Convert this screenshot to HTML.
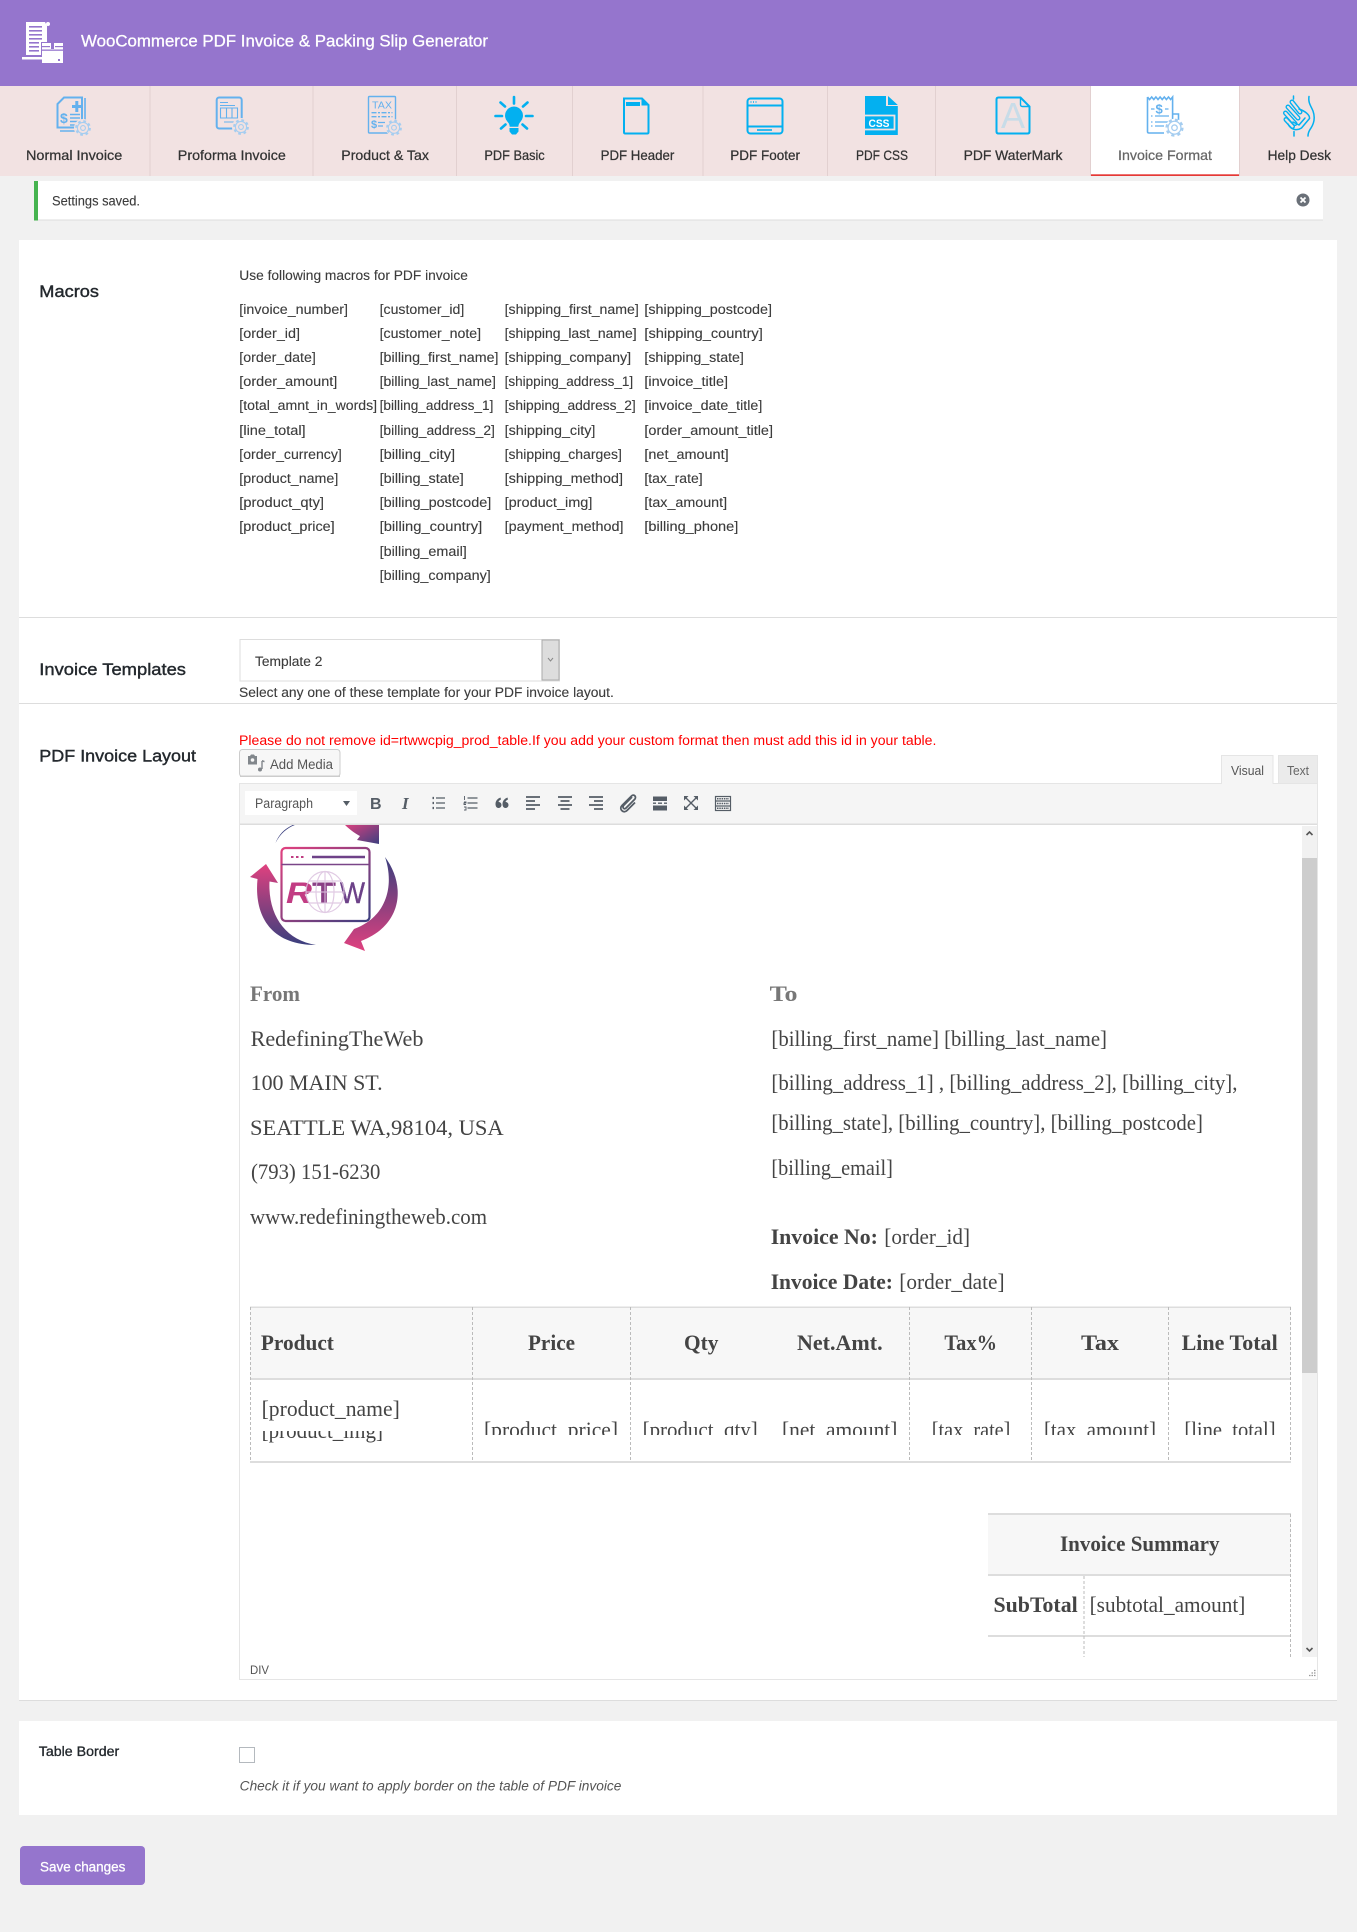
<!DOCTYPE html>
<html lang="en">
<head>
<meta charset="utf-8">
<title>WooCommerce PDF Invoice &amp; Packing Slip Generator</title>
<style>
html,body{margin:0;padding:0;background:#f1f1f1;width:1357px;height:1932px;overflow:hidden}
svg{display:block}
text{font-family:"Liberation Sans",sans-serif;white-space:pre}
.m{font-size:13.5px;fill:#3c3c3c;stroke:#3c3c3c;stroke-width:.12}
.tab{font-size:14px;fill:#333;stroke:#333;stroke-width:.25}
.h{font-size:17px;fill:#23282d;stroke:#23282d;stroke-width:.4}
.s{font-family:"Liberation Serif",serif;font-size:22px;fill:#444}
.b{font-family:"Liberation Serif",serif;font-size:22px;font-weight:bold;fill:#444}
.ci{fill:none;stroke:#03b0f0;stroke-width:2}
.li{fill:none;stroke:#64b1ee;stroke-width:1.6}
.tb{fill:#555d66}
.tl{stroke:#555d66;stroke-width:2;fill:none}
</style>
</head>
<body>
<svg xmlns="http://www.w3.org/2000/svg" width="1357" height="1932" viewBox="0 0 1357 1932">
<defs>
<linearGradient id="g1" x1="0" y1="0" x2="1" y2="1"><stop offset="0" stop-color="#e0417f"/><stop offset="1" stop-color="#3d3f7f"/></linearGradient>
<linearGradient id="g2" x1="0" y1="0" x2="0" y2="1"><stop offset="0" stop-color="#e0417f"/><stop offset="1" stop-color="#3a3f7e"/></linearGradient>
<linearGradient id="g3" x1="0" y1="0" x2="0" y2="1"><stop offset="0" stop-color="#3a3f7e"/><stop offset="1" stop-color="#e0417f"/></linearGradient>
<clipPath id="ed"><rect x="240" y="825" width="1061" height="832"/></clipPath>
<clipPath id="cu"><rect x="240" y="1381" width="1061" height="54"/></clipPath>
<clipPath id="cd"><rect x="240" y="1431" width="232" height="30"/></clipPath>
<g id="gearF"><circle r="6.6" fill="none" stroke="#a5cdf0" stroke-width="2.6" stroke-dasharray="2.6 2.6"/><circle r="5.6" fill="none" stroke="#a5cdf0" stroke-width="1.1"/><circle r="2.4" fill="none" stroke="#a5cdf0" stroke-width="1.1"/></g>
</defs>

<!-- page -->
<rect width="1357" height="1932" fill="#f1f1f1"/>

<!-- header -->
<rect width="1357" height="86" fill="#9575cd"/>
<g fill="#fff">
<path d="M26 22H45L47 26V42H41V55H26Z"/><circle cx="48" cy="24" r="2"/>
<rect x="22" y="57" width="24" height="2.500"/>
<rect x="42" y="43" width="21" height="20"/>
</g>
<g fill="#9575cd">
<rect x="29" y="26" width="13" height="1.600"/><rect x="29" y="30" width="13" height="1.600"/><rect x="29" y="34" width="13" height="1.600"/><rect x="29" y="38" width="13" height="1.600"/><rect x="29" y="42" width="10" height="1.600"/><rect x="29" y="46" width="10" height="1.600"/><rect x="29" y="50" width="10" height="1.600"/>
<rect x="51" y="42" width="3" height="7"/><rect x="42" y="46" width="8" height="1.200"/><rect x="55" y="46" width="8" height="1.200"/><rect x="42" y="49.500" width="21" height="1.300"/><rect x="58" y="59" width="2" height="2"/>
</g>
<text x="81" y="46.700" font-size="16.500" fill="#fff" stroke="#fff" stroke-width=".3" textLength="407" lengthAdjust="spacingAndGlyphs">WooCommerce PDF Invoice &amp; Packing Slip Generator</text>

<!-- tabs -->
<rect y="86" width="1357" height="90" fill="#f2e2e2"/>
<g fill="#e2d0d0">
<rect x="149.500" y="86" width="1" height="90"/><rect x="312.500" y="86" width="1" height="90"/><rect x="456" y="86" width="1" height="90"/><rect x="572" y="86" width="1" height="90"/><rect x="702.500" y="86" width="1" height="90"/><rect x="827" y="86" width="1" height="90"/><rect x="935" y="86" width="1" height="90"/>
</g>
<rect x="1091" y="86" width="148" height="90" fill="#fff"/>
<rect x="1091" y="174.300" width="148" height="1.700" fill="#e53935"/>
<rect x="1090" y="86" width="1" height="90" fill="#e2d0d0"/><rect x="1239" y="86" width="1" height="90" fill="#e2d0d0"/>
<text class="tab" x="26" y="160" textLength="96.300" lengthAdjust="spacingAndGlyphs">Normal Invoice</text>
<text class="tab" x="177.800" y="160" textLength="108" lengthAdjust="spacingAndGlyphs">Proforma Invoice</text>
<text class="tab" x="341.300" y="160" textLength="87.600" lengthAdjust="spacingAndGlyphs">Product &amp; Tax</text>
<text class="tab" x="484.400" y="160" textLength="60.300" lengthAdjust="spacingAndGlyphs">PDF Basic</text>
<text class="tab" x="600.600" y="160" textLength="73.700" lengthAdjust="spacingAndGlyphs">PDF Header</text>
<text class="tab" x="730.300" y="160" textLength="69.700" lengthAdjust="spacingAndGlyphs">PDF Footer</text>
<text class="tab" x="856" y="160" textLength="52" lengthAdjust="spacingAndGlyphs">PDF CSS</text>
<text class="tab" x="963.600" y="160" textLength="98.900" lengthAdjust="spacingAndGlyphs">PDF WaterMark</text>
<text class="tab" x="1118" y="160" textLength="94" lengthAdjust="spacingAndGlyphs" style="fill:#666;stroke:#666">Invoice Format</text>
<text class="tab" x="1267.600" y="160" textLength="63.400" lengthAdjust="spacingAndGlyphs">Help Desk</text>

<!-- tab icons -->
<!-- normal invoice -->
<path class="li" style="stroke-width:2" d="M64 97.500H82V127.500H57.500V104Z"/>
<path class="li" d="M85 98V131H60"/>
<path d="M72 105h3.300v-4h3v4h3.500v3h-3.500v4h-3v-4H72z" fill="#64b1ee"/>
<text x="60" y="123" font-size="14" font-weight="bold" fill="#64b1ee">$</text>
<path d="M70 114.500h10M70 118h10M70 121.500h10M70 125h7" stroke="#64b1ee" stroke-width="1.600" fill="none"/>
<circle cx="83" cy="128" r="9" fill="#f2e2e2"/><use href="#gearF" x="83" y="128"/>
<!-- proforma -->
<rect class="li" style="stroke-width:2" x="216.700" y="97.500" width="25" height="31" rx="2.500"/>
<path class="li" style="stroke-width:1.100" d="M220 102.500h8M220 105.500h15M220.500 108h17v10h-17zM226.500 108v10M232 108v10M224 122h10"/>
<circle cx="241" cy="127" r="9" fill="#f2e2e2"/><use href="#gearF" x="241" y="127"/>
<!-- tax -->
<rect class="li" style="stroke-width:1.400" x="368.500" y="96.500" width="27" height="36.500" rx="1"/>
<text x="372" y="108.700" font-size="10.500" fill="#64b1ee" textLength="20" lengthAdjust="spacingAndGlyphs">TAX</text>
<path d="M371.500 112.700h21M371.500 116.700h21" stroke="#64b1ee" stroke-width="1.400" stroke-dasharray="5 1.500 2 1.500" fill="none"/>
<text x="371" y="128" font-size="11" font-weight="bold" fill="#64b1ee">$</text>
<path d="M378 122.500h7M378 126h5" stroke="#64b1ee" stroke-width="1.300" fill="none"/>
<circle cx="394" cy="127.700" r="8.500" fill="#f2e2e2"/><use href="#gearF" x="394" y="127.700"/>
<!-- bulb -->
<path d="M514 106.500a9 9 0 0 1 6.500 15.200c-1.500 1.700-2 3-2.200 5h-8.600c-.2-2-.7-3.300-2.200-5A9 9 0 0 1 514 106.500z" fill="#03b0f0"/>
<path d="M509.500 128h9v3.500l-2.500 3h-4l-2.500-3z" fill="#03b0f0"/>
<path d="M514 97v6.500M500.500 102.500l4.500 4M527.500 102.500l-4.500 4M495.500 116h6.500M526 116h6.500M501 128.500l4.500-4M527 128.500l-4.500-4" stroke="#03b0f0" stroke-width="2.600" stroke-linecap="round" fill="none"/>
<!-- header -->
<path class="ci" d="M624 98.500H642L648.500 105V132.300Q648.500 133.500 647.300 133.500H625.200Q624 133.500 624 132.300Z"/>
<path d="M641.500 99L648 105.500H641.500Z" fill="#03b0f0"/>
<rect x="626" y="102" width="14" height="4" fill="#03b0f0"/>
<!-- footer -->
<rect class="ci" x="747.500" y="98.500" width="35" height="35" rx="3"/>
<path class="ci" d="M747.500 105.500h35M747.500 126.500h35"/>
<path d="M757 130h15" stroke="#03b0f0" stroke-width="1.600"/>
<path d="M750.500 102h1M753 102h1M755.500 102h1" stroke="#03b0f0" stroke-width="1.500"/>
<!-- css -->
<path d="M865 96H886V106H897.800V135H865Z" fill="#03b0f0"/>
<path d="M888 96L897.800 105H888Z" fill="#03b0f0"/>
<path d="M865 115.500H894.500V129.500H865" fill="none" stroke="#f2e2e2" stroke-width="1.800"/>
<text x="868.500" y="126.800" font-size="11" font-weight="bold" fill="#fff" textLength="21" lengthAdjust="spacingAndGlyphs">CSS</text>
<!-- watermark -->
<text x="1001" y="128" font-size="36" fill="#c8dce8" textLength="24" lengthAdjust="spacingAndGlyphs">A</text>
<path class="ci" d="M998.500 97.500H1020.500L1029.500 106.500V131.500Q1029.500 133.500 1027.500 133.500H998.500Q996.500 133.500 996.500 131.500V99.500Q996.500 97.500 998.500 97.500Z"/>
<path class="ci" style="stroke-width:1.400" d="M1020.500 98V104.500Q1020.500 106.500 1022.500 106.500H1029"/>
<!-- invoice format -->
<path class="li" d="M1147.500 97l2.100 2.500 2.100-2.500 2.100 2.500 2.100-2.500 2.100 2.500 2.100-2.500 2.100 2.500 2.100-2.500 2.100 2.500 2.100-2.500 2.100 2.500 2 -2.500V129M1147.500 97V131.500Q1147.500 133 1149 133H1164"/>
<path class="li" d="M1173 114h5.500v8"/>
<text x="1155.500" y="113.500" font-size="13" font-weight="bold" fill="#64b1ee">$</text>
<path d="M1151 109h3.500M1165 109h3.500" stroke="#64b1ee" stroke-width="1.300"/>
<path d="M1151 116h1.500M1155 116h14M1151 122h1.500M1155 122h14M1151 126h1.500M1155 126h9" stroke="#64b1ee" stroke-width="1.300" fill="none"/>
<circle cx="1174.500" cy="127.700" r="9" fill="#fff"/>
<g transform="translate(1174.500 127.700) scale(1.150)"><use href="#gearF"/></g>
<!-- help desk -->
<g fill="none" stroke-linecap="round" stroke-linejoin="round">
<g stroke="#03b0f0" stroke-width="5"><path d="M1292 102L1300 112M1288 107L1298 118M1285.500 113L1295 123.500M1286 119.500L1292.500 126.500"/></g>
<g stroke="#f2e2e2" stroke-width="2.200"><path d="M1292 102L1300 112M1288 107L1298 118M1285.500 113L1295 123.500M1286 119.500L1292.500 126.500"/></g>
<g stroke="#03b0f0" stroke-width="1.500">
<path d="M1309 96.500C1308 103 1311 106 1313 111C1315.500 118 1314 124 1310 129.500C1308.500 132 1308 134 1308 136"/>
<path d="M1293.500 96V99"/><path d="M1294 131.500V136"/>
<path d="M1299 109C1305 111 1310 115 1309.500 118.500L1301.500 128C1297 131 1291 130 1288 124"/>
<path d="M1293 122L1299 125L1305 118"/>
</g>
</g>

<!-- notice -->
<rect x="34" y="181" width="1289" height="39" fill="#fff"/>
<rect x="34" y="219.500" width="1289" height="1" fill="#ddd"/>
<rect x="34" y="181" width="4" height="39.500" fill="#46b450"/>
<text class="m" x="52" y="205.700" textLength="88" lengthAdjust="spacingAndGlyphs">Settings saved.</text>
<circle cx="1303" cy="200" r="6.500" fill="#6a7078"/>
<path d="M1300.500 197.500l5 5M1305.500 197.500l-5 5" stroke="#fff" stroke-width="1.800"/>

<!-- main panel -->
<rect x="19" y="240" width="1318" height="1461" fill="#fff"/>
<rect x="19" y="1700" width="1318" height="1" fill="#ddd"/>
<rect x="19" y="617" width="1318" height="1" fill="#ddd"/>
<rect x="19" y="703" width="1318" height="1" fill="#ddd"/>

<!-- macros -->
<text class="h" x="39.300" y="297" textLength="59.700" lengthAdjust="spacingAndGlyphs">Macros</text>
<text class="m" x="239.300" y="280" textLength="228.600" lengthAdjust="spacingAndGlyphs">Use following macros for PDF invoice</text>

<text class="m" x="239.300" y="314" textLength="108.700" lengthAdjust="spacingAndGlyphs">[invoice_number]</text>
<text class="m" x="239.300" y="338" textLength="60.700" lengthAdjust="spacingAndGlyphs">[order_id]</text>
<text class="m" x="239.300" y="362" textLength="76.500" lengthAdjust="spacingAndGlyphs">[order_date]</text>
<text class="m" x="239.300" y="386" textLength="98" lengthAdjust="spacingAndGlyphs">[order_amount]</text>
<text class="m" x="239.300" y="410" textLength="137.800" lengthAdjust="spacingAndGlyphs">[total_amnt_in_words]</text>
<text class="m" x="239.300" y="435" textLength="66.300" lengthAdjust="spacingAndGlyphs">[line_total]</text>
<text class="m" x="239.300" y="459" textLength="102.500" lengthAdjust="spacingAndGlyphs">[order_currency]</text>
<text class="m" x="239.300" y="483" textLength="99" lengthAdjust="spacingAndGlyphs">[product_name]</text>
<text class="m" x="239.300" y="507" textLength="84.700" lengthAdjust="spacingAndGlyphs">[product_qty]</text>
<text class="m" x="239.300" y="531" textLength="95.400" lengthAdjust="spacingAndGlyphs">[product_price]</text>

<text class="m" x="379.600" y="314" textLength="84.700" lengthAdjust="spacingAndGlyphs">[customer_id]</text>
<text class="m" x="379.600" y="338" textLength="101.500" lengthAdjust="spacingAndGlyphs">[customer_note]</text>
<text class="m" x="379.600" y="362" textLength="118.900" lengthAdjust="spacingAndGlyphs">[billing_first_name]</text>
<text class="m" x="379.600" y="386" textLength="116.300" lengthAdjust="spacingAndGlyphs">[billing_last_name]</text>
<text class="m" x="379.600" y="410" textLength="113.800" lengthAdjust="spacingAndGlyphs">[billing_address_1]</text>
<text class="m" x="379.600" y="435" textLength="115.300" lengthAdjust="spacingAndGlyphs">[billing_address_2]</text>
<text class="m" x="379.600" y="459" textLength="75.500" lengthAdjust="spacingAndGlyphs">[billing_city]</text>
<text class="m" x="379.600" y="483" textLength="84.200" lengthAdjust="spacingAndGlyphs">[billing_state]</text>
<text class="m" x="379.600" y="507" textLength="111.700" lengthAdjust="spacingAndGlyphs">[billing_postcode]</text>
<text class="m" x="379.600" y="531" textLength="102.600" lengthAdjust="spacingAndGlyphs">[billing_country]</text>
<text class="m" x="379.600" y="556" textLength="87.200" lengthAdjust="spacingAndGlyphs">[billing_email]</text>
<text class="m" x="379.600" y="580" textLength="111.200" lengthAdjust="spacingAndGlyphs">[billing_company]</text>

<text class="m" x="504.600" y="314" textLength="134.200" lengthAdjust="spacingAndGlyphs">[shipping_first_name]</text>
<text class="m" x="504.600" y="338" textLength="132.100" lengthAdjust="spacingAndGlyphs">[shipping_last_name]</text>
<text class="m" x="504.600" y="362" textLength="126.500" lengthAdjust="spacingAndGlyphs">[shipping_company]</text>
<text class="m" x="504.600" y="386" textLength="128.600" lengthAdjust="spacingAndGlyphs">[shipping_address_1]</text>
<text class="m" x="504.600" y="410" textLength="131.100" lengthAdjust="spacingAndGlyphs">[shipping_address_2]</text>
<text class="m" x="504.600" y="435" textLength="90.800" lengthAdjust="spacingAndGlyphs">[shipping_city]</text>
<text class="m" x="504.600" y="459" textLength="117.300" lengthAdjust="spacingAndGlyphs">[shipping_charges]</text>
<text class="m" x="504.600" y="483" textLength="118.400" lengthAdjust="spacingAndGlyphs">[shipping_method]</text>
<text class="m" x="504.600" y="507" textLength="87.800" lengthAdjust="spacingAndGlyphs">[product_img]</text>
<text class="m" x="504.600" y="531" textLength="118.900" lengthAdjust="spacingAndGlyphs">[payment_method]</text>

<text class="m" x="644.400" y="314" textLength="127.600" lengthAdjust="spacingAndGlyphs">[shipping_postcode]</text>
<text class="m" x="644.400" y="338" textLength="118.400" lengthAdjust="spacingAndGlyphs">[shipping_country]</text>
<text class="m" x="644.400" y="362" textLength="99.500" lengthAdjust="spacingAndGlyphs">[shipping_state]</text>
<text class="m" x="644.400" y="386" textLength="83.700" lengthAdjust="spacingAndGlyphs">[invoice_title]</text>
<text class="m" x="644.400" y="410" textLength="117.900" lengthAdjust="spacingAndGlyphs">[invoice_date_title]</text>
<text class="m" x="644.400" y="435" textLength="128.600" lengthAdjust="spacingAndGlyphs">[order_amount_title]</text>
<text class="m" x="644.400" y="459" textLength="84.200" lengthAdjust="spacingAndGlyphs">[net_amount]</text>
<text class="m" x="644.400" y="483" textLength="58.200" lengthAdjust="spacingAndGlyphs">[tax_rate]</text>
<text class="m" x="644.400" y="507" textLength="82.700" lengthAdjust="spacingAndGlyphs">[tax_amount]</text>
<text class="m" x="644.400" y="531" textLength="93.900" lengthAdjust="spacingAndGlyphs">[billing_phone]</text>

<!-- templates -->
<text class="h" x="39.300" y="675" textLength="146.700" lengthAdjust="spacingAndGlyphs">Invoice Templates</text>
<rect x="240" y="639.500" width="319.500" height="41.500" fill="#fff" stroke="#ddd"/>
<rect x="542" y="640" width="17" height="40" fill="#ddd" stroke="#aaa"/>
<path d="M548 658l2.500 3 2.500-3" fill="none" stroke="#888" stroke-width="1"/>
<text class="m" x="255" y="666" textLength="67.400" lengthAdjust="spacingAndGlyphs">Template 2</text>
<text class="m" x="239" y="697" textLength="374.800" lengthAdjust="spacingAndGlyphs">Select any one of these template for your PDF invoice layout.</text>

<!-- layout -->
<text class="h" x="39.300" y="761.600" textLength="156.700" lengthAdjust="spacingAndGlyphs">PDF Invoice Layout</text>
<text x="239" y="745" font-size="13.500" fill="#f00" textLength="697.400" lengthAdjust="spacingAndGlyphs">Please do not remove id=rtwwcpig_prod_table.If you add your custom format then must add this id in your table.</text>

<!-- add media -->
<rect x="239.500" y="749.500" width="100.500" height="27" rx="3" fill="#f7f7f7" stroke="#ccc"/>
<rect x="240" y="775.500" width="100" height="1.500" fill="#ccc"/>
<path d="M248 756h2l1-1.500h3l1 1.500h2v8.500h-9z" fill="#82878c"/><circle cx="252.500" cy="760" r="1.800" fill="#f7f7f7"/>
<path d="M262 761v8" stroke="#82878c" stroke-width="1.400"/><path d="M262 760l2.500 .8v1.600l-2.500-.8z" fill="#82878c"/><circle cx="260" cy="769.500" r="2" fill="#82878c"/>
<text x="270" y="769" font-size="13.500" fill="#555" textLength="63" lengthAdjust="spacingAndGlyphs">Add Media</text>

<!-- editor tabs -->
<rect x="1221.500" y="755.500" width="51.500" height="29" fill="#f5f5f5" stroke="#e5e5e5"/>
<rect x="1278.500" y="755.500" width="39" height="28" fill="#ebebeb" stroke="#e5e5e5"/>
<text x="1231" y="775" font-size="13" fill="#555" textLength="33" lengthAdjust="spacingAndGlyphs">Visual</text>
<text x="1287" y="775" font-size="13" fill="#666" textLength="22" lengthAdjust="spacingAndGlyphs">Text</text>

<!-- editor frame -->
<rect x="239.500" y="783.500" width="1078" height="896" fill="#fff" stroke="#e5e5e5"/>
<rect x="240" y="784" width="1077" height="40" fill="#f5f5f5"/>
<rect x="1221.900" y="783" width="50.700" height="2" fill="#f5f5f5"/>
<rect x="240" y="823.500" width="1077" height="1.500" fill="#ddd"/>

<!-- toolbar -->
<rect x="245" y="791" width="112" height="24" fill="#fff"/>
<text x="255" y="808" font-size="13.500" fill="#555" textLength="58" lengthAdjust="spacingAndGlyphs">Paragraph</text>
<path d="M343 801h7l-3.500 5z" fill="#555d66"/>
<text x="370" y="809" font-size="16" font-weight="bold" class="tb">B</text>
<text x="402" y="809" font-size="17" font-weight="bold" font-style="italic" class="tb" style="font-family:'Liberation Serif',serif">I</text>
<path class="tl" style="stroke-width:1.300" d="M436 798h9M436 803h9M436 808h9"/>
<path d="M432.500 798h1.500M432.500 803h1.500M432.500 808h1.500" stroke="#555d66" stroke-width="2.200"/>
<path class="tl" style="stroke-width:1.300" d="M467.500 798h10M467.500 803h10M467.500 808h10"/>
<path d="M464.500 796v4M464 802h2v1h-2v1.500h2M464 807h2v3h-2" fill="none" stroke="#555d66" stroke-width=".9"/>
<path d="M500.500 797.500c-3 1-5 3.500-5 6.500 0 2.500 1.300 4 3 4s3-1.300 3-3-1.200-3-3-3c.3-1 1-1.800 2.500-2.500zM507.500 797.500c-3 1-5 3.500-5 6.500 0 2.500 1.300 4 3 4s3-1.300 3-3-1.200-3-3-3c.3-1 1-1.800 2.500-2.500z" class="tb"/>
<path class="tl" style="stroke-width:1.700" d="M526 797h14M526 801h9M526 805h14M526 809h9"/>
<path class="tl" style="stroke-width:1.700" d="M558 797h14M560.500 801h9M558 805h14M560.500 809h9"/>
<path class="tl" style="stroke-width:1.700" d="M589 797h14M594 801h9M589 805h14M594 809h9"/>
<path d="M632 799l-8 8c-2 2-.5 4.500 1.500 3.500l9-9c2.500-2.500-.5-6-3-3.500l-9.500 9.500c-3.500 3.500 1.500 8.500 5 5l8-8" fill="none" stroke="#555d66" stroke-width="1.800" transform="translate(0 -2)"/>
<path d="M653 796.500h14v4.500h-14zM653 805.500h14v5h-14z" class="tb"/><path d="M653 803.200h3M658 803.200h4M664 803.200h3" stroke="#555d66" stroke-width="1.400"/>
<path d="M685 797l12 12M697 797l-12 12" class="tl" style="stroke-width:1.400"/>
<path d="M684 796h4.500l-4.500 4.500zM698 796h-4.500l4.500 4.500zM684 810h4.500l-4.500-4.500zM698 810h-4.500l4.500-4.500z" class="tb"/>
<rect x="715.500" y="796.500" width="15" height="14" fill="none" stroke="#555d66" stroke-width="1.200"/>
<path d="M716 801h14M716 806h14" stroke="#555d66" stroke-width="1.200"/>
<path d="M717 798.700h12M717 803.500h12M717 808.300h12" stroke="#555d66" stroke-width="1.500" stroke-dasharray="1.500 .8"/>

<!-- editor content -->
<g clip-path="url(#ed)">
<!-- logo -->
<path d="M275.500 843C281 832 290 826 298 824L295 824C285 828 279 834 275.500 843Z" fill="#3a3f7e"/>
<path d="M344 824C350 830 356 834 360 836L357 840L379 844V824Z" fill="url(#g1)"/>
<path d="M250 877L266 864L278 883L269.500 881.500C268 915 285 940 316 945C270 945 254 915 257.500 879Z" fill="url(#g2)"/>
<path d="M385 857C393 880 391 915 354 929L344 943L365 951L361 941C403 925 406 885 385 857Z" fill="url(#g3)"/>
<rect x="281.500" y="848" width="88" height="73" rx="4" fill="#fff" stroke="url(#g1)" stroke-width="2.200"/>
<path d="M281.500 864.500H369.500" stroke="#7a4688" stroke-width="1.600"/>
<path d="M291 857h2.500M296 857h2.500M301 857h2.500" stroke="#c03d82" stroke-width="2"/>
<path d="M312 857H365" stroke="#6e4288" stroke-width="2.500"/>
<text x="286" y="903" font-size="30" font-style="italic" font-weight="bold" fill="#c23c83" textLength="26" lengthAdjust="spacingAndGlyphs">R</text>
<text x="312" y="903" font-size="30" font-weight="bold" fill="#8a3f85" textLength="24" lengthAdjust="spacingAndGlyphs">T</text>
<text x="340" y="903" font-size="30" fill="#6c4188" stroke="#6c4188" stroke-width=".4" textLength="25" lengthAdjust="spacingAndGlyphs">W</text>
<g fill="none" stroke="#dcc3e0" stroke-width="1.200" opacity=".85">
<ellipse cx="325" cy="892" rx="19" ry="20.500"/><ellipse cx="325" cy="892" rx="9" ry="20.500"/>
<path d="M325 871.500V912.500M306 892H344M309 881H341M309 903H341"/>
</g>

<!-- address -->
<text class="b" style="fill:#777" x="250" y="1001" textLength="50" lengthAdjust="spacingAndGlyphs">From</text>
<text class="s" x="250.600" y="1046" textLength="172.800" lengthAdjust="spacingAndGlyphs">RedefiningTheWeb</text>
<text class="s" x="250.600" y="1090" textLength="132" lengthAdjust="spacingAndGlyphs">100 MAIN ST.</text>
<text class="s" x="250" y="1135" textLength="253.700" lengthAdjust="spacingAndGlyphs">SEATTLE WA,98104, USA</text>
<text class="s" x="251" y="1179" textLength="129.300" lengthAdjust="spacingAndGlyphs">(793) 151-6230</text>
<text class="s" x="250" y="1224" textLength="237" lengthAdjust="spacingAndGlyphs">www.redefiningtheweb.com</text>

<text class="b" style="fill:#777" x="769.600" y="1001" textLength="27.900" lengthAdjust="spacingAndGlyphs">To</text>
<text class="s" x="771.400" y="1046" textLength="335.600" lengthAdjust="spacingAndGlyphs">[billing_first_name] [billing_last_name]</text>
<text class="s" x="771.400" y="1090" textLength="466.100" lengthAdjust="spacingAndGlyphs">[billing_address_1] , [billing_address_2], [billing_city],</text>
<text class="s" x="771.400" y="1130" textLength="431.500" lengthAdjust="spacingAndGlyphs">[billing_state], [billing_country], [billing_postcode]</text>
<text class="s" x="771.400" y="1175" textLength="121.500" lengthAdjust="spacingAndGlyphs">[billing_email]</text>
<text class="b" x="770.700" y="1244" textLength="107.200" lengthAdjust="spacingAndGlyphs">Invoice No:</text>
<text class="s" x="884.300" y="1244" textLength="85.700" lengthAdjust="spacingAndGlyphs">[order_id]</text>
<text class="b" x="770.700" y="1289" textLength="122.200" lengthAdjust="spacingAndGlyphs">Invoice Date:</text>
<text class="s" x="899.300" y="1289" textLength="105.300" lengthAdjust="spacingAndGlyphs">[order_date]</text>

<!-- product table -->
<rect x="250" y="1307" width="1041" height="72" fill="#f7f7f7"/>
<rect x="250" y="1306.500" width="1041" height="1.500" fill="#ddd"/>
<text class="b" x="260.900" y="1350" textLength="73" lengthAdjust="spacingAndGlyphs">Product</text>
<text class="b" x="528" y="1350" textLength="47" lengthAdjust="spacingAndGlyphs">Price</text>
<text class="b" x="684" y="1350" textLength="34.400" lengthAdjust="spacingAndGlyphs">Qty</text>
<text class="b" x="797" y="1350" textLength="85.600" lengthAdjust="spacingAndGlyphs">Net.Amt.</text>
<text class="b" x="944.400" y="1350" textLength="52.600" lengthAdjust="spacingAndGlyphs">Tax%</text>
<text class="b" x="1081" y="1350" textLength="38" lengthAdjust="spacingAndGlyphs">Tax</text>
<text class="b" x="1181.600" y="1350" textLength="96.100" lengthAdjust="spacingAndGlyphs">Line Total</text>
<rect x="250" y="1378" width="1041" height="2" fill="#ddd"/>
<rect x="250" y="1461" width="1041" height="2" fill="#ddd"/>
<g stroke="#bbb" stroke-dasharray="3 2" fill="none">
<path d="M250.500 1307V1462M472.500 1307V1462M630.500 1307V1462M909.500 1307V1462M1031.500 1307V1462M1168.500 1307V1462M1290.500 1307V1462"/>
</g>
<text class="s" x="261.600" y="1416" textLength="138.200" lengthAdjust="spacingAndGlyphs">[product_name]</text>
<g clip-path="url(#cd)"><text class="s" x="261.600" y="1438" textLength="121.400" lengthAdjust="spacingAndGlyphs">[product_img]</text></g>
<g clip-path="url(#cu)">
<text class="s" x="484" y="1437" textLength="134" lengthAdjust="spacingAndGlyphs">[product_price]</text>
<text class="s" x="642.600" y="1437" textLength="115.100" lengthAdjust="spacingAndGlyphs">[product_qty]</text>
<text class="s" x="782" y="1437" textLength="115.400" lengthAdjust="spacingAndGlyphs">[net_amount]</text>
<text class="s" x="931.800" y="1437" textLength="78.600" lengthAdjust="spacingAndGlyphs">[tax_rate]</text>
<text class="s" x="1044" y="1437" textLength="112" lengthAdjust="spacingAndGlyphs">[tax_amount]</text>
<text class="s" x="1184.400" y="1437" textLength="91.200" lengthAdjust="spacingAndGlyphs">[line_total]</text>
</g>

<!-- summary table -->
<rect x="988" y="1514" width="303" height="61" fill="#f7f7f7"/>
<rect x="988" y="1513" width="303" height="2" fill="#ddd"/>
<rect x="988" y="1574" width="303" height="2" fill="#ddd"/>
<rect x="988" y="1635" width="303" height="2" fill="#ddd"/>
<g stroke="#bbb" stroke-dasharray="3 2" fill="none">
<path d="M1290.500 1514V1657M1084 1576V1657"/>
</g>
<text class="b" x="1060" y="1551" textLength="159.500" lengthAdjust="spacingAndGlyphs">Invoice Summary</text>
<text class="b" x="993.500" y="1612" textLength="84.200" lengthAdjust="spacingAndGlyphs">SubTotal</text>
<text class="s" x="1089.600" y="1612" textLength="155.800" lengthAdjust="spacingAndGlyphs">[subtotal_amount]</text>
</g>

<!-- scrollbar -->
<rect x="1302" y="826" width="15" height="831" fill="#f1f1f1"/>
<rect x="1302" y="858" width="15" height="515" fill="#cdcdcd"/>
<path d="M1306.500 835l3-3 3 3" fill="none" stroke="#555" stroke-width="1.600"/>
<path d="M1306.500 1648l3 3 3-3" fill="none" stroke="#555" stroke-width="1.600"/>

<!-- status bar -->
<text x="250" y="1674" font-size="12" fill="#555" textLength="19" lengthAdjust="spacingAndGlyphs">DIV</text>
<path d="M1314 1670.500h1.500M1311.500 1673h1.500M1314 1673h1.500M1309 1675.500h1.500M1311.500 1675.500h1.500M1314 1675.500h1.500" stroke="#999" stroke-width="1.300"/>

<!-- table border panel -->
<rect x="19" y="1721" width="1318" height="94" fill="#fff"/>
<text x="38.800" y="1756" font-size="13.500" fill="#23282d" stroke="#23282d" stroke-width=".3" textLength="80.400" lengthAdjust="spacingAndGlyphs">Table Border</text>
<rect x="239.500" y="1747.500" width="15" height="15" fill="#fff" stroke="#b4b9be"/>
<text x="239.700" y="1790.700" font-size="13.500" font-style="italic" fill="#555" textLength="381.700" lengthAdjust="spacingAndGlyphs">Check it if you want to apply border on the table of PDF invoice</text>

<!-- save -->
<rect x="20" y="1846" width="125" height="39" rx="4" fill="#9575cd"/>
<text x="40" y="1871.700" font-size="13.500" fill="#fff" stroke="#fff" stroke-width=".3" textLength="85.400" lengthAdjust="spacingAndGlyphs">Save changes</text>
</svg>
</body>
</html>
